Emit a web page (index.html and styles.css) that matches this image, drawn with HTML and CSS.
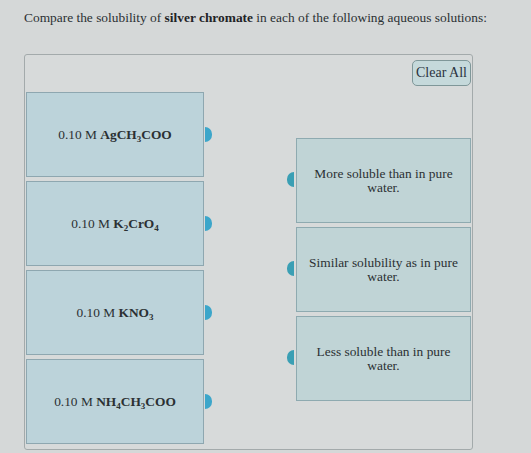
FILE: index.html
```html
<!DOCTYPE html>
<html lang="en">

<head>
    <meta charset="UTF-8" />
    <meta name="viewport" content="width=device-width, initial-scale=1.0" />
    <title>Solubility | Drag and Drop</title>
    <link rel="stylesheet" href="styles.css">
</head>

<body>
    <p class="question">Compare the solubility of <b>silver chromate</b> in each of the following aqueous solutions:</p>

    <div class="drag-panel">
        <div class="panel-top">
            <button class="clear-btn">Clear All</button>
        </div>

        <div class="columns">
            <div class="source-list">
                <div class="source-item"><span>0.10 M <b>AgCH<sub>3</sub>COO</b></span><span class="tab-right"></span></div>
                <div class="source-item"><span>0.10 M <b>K<sub>2</sub>CrO<sub>4</sub></b></span><span class="tab-right"></span></div>
                <div class="source-item"><span>0.10 M <b>KNO<sub>3</sub></b></span><span class="tab-right"></span></div>
                <div class="source-item"><span>0.10 M <b>NH<sub>4</sub>CH<sub>3</sub>COO</b></span><span class="tab-right"></span></div>
            </div>

            <div class="target-list">
                <div class="target-item"><span class="tab-left"></span><span>More soluble than in pure water.</span></div>
                <div class="target-item"><span class="tab-left"></span><span>Similar solubility as in pure water.</span></div>
                <div class="target-item"><span class="tab-left"></span><span>Less soluble than in pure water.</span></div>
            </div>
        </div>
    </div>
</body>

</html>
```

FILE: styles.css
```css
body {
    margin: 0;
    padding: 0;
    font-family: 'Liberation Serif', 'Times New Roman', serif;
    background: #d5d8d8;
    color: #2b3033;
    overflow: hidden;
}

.question {
    margin: 0;
    padding: 10px 0 0 24px;
    font-size: 13.4px;
    line-height: 16px;
}

.question b {
    color: #1f2326;
}

/* drag area */
.drag-panel {
    margin: 28px 0 0 24px;
    width: 445px;
    padding: 5px 1px 5px 1px;
    border: 1px solid #a3aaab;
    border-radius: 3px;
    background: #d7dada;
}

.panel-top {
    display: flex;
    justify-content: flex-end;
}

.clear-btn {
    width: 59px;
    height: 26px;
    padding: 0;
    font-family: 'Liberation Serif', 'Times New Roman', serif;
    font-size: 14px;
    color: #2b3340;
    background: #c5d9db;
    border: 1px solid #7f9799;
    border-radius: 5px;
}

.columns {
    display: flex;
    justify-content: space-between;
    margin-top: 6px;
}

.source-list,
.target-list {
    display: flex;
    flex-direction: column;
    gap: 4px;
}

.target-list {
    padding-top: 46px;
}

.source-item,
.target-item {
    position: relative;
    display: flex;
    align-items: center;
    justify-content: center;
    text-align: center;
    box-sizing: border-box;
    height: 85px;
    font-size: 13.4px;
    line-height: 14px;
}

.source-item {
    width: 178px;
    background: #bcd3da;
    border: 1px solid #8ea7b0;
}

.target-item {
    width: 175px;
    padding: 0 10px;
    background: #c0d4d6;
    border: 1px solid #8eaab0;
}

sub {
    font-size: 9px;
    line-height: 0;
    vertical-align: -3px;
}

/* little connector tabs */
.tab-right,
.tab-left {
    position: absolute;
    top: 50%;
    width: 7px;
    height: 15px;
    margin-top: -8px;
    background: #3ca6ca;
}

.tab-right {
    right: -9px;
    border-radius: 0 8px 8px 0;
}

.tab-left {
    left: -10px;
    margin-top: -9px;
    background: #3a9fb4;
    border-radius: 8px 0 0 8px;
}
```
